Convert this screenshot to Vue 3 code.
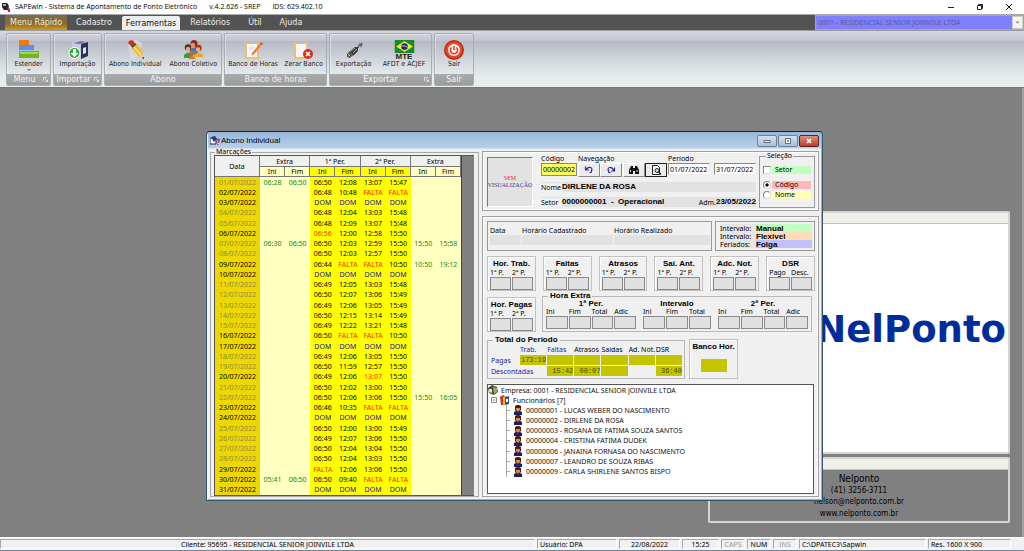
<script setup>
import { ref } from 'vue'

const menus = ['Cadastro', 'Ferramentas', 'Relatórios', 'Útil', 'Ajuda']

const F = 'FALTA'
const D = 'DOM'
const sunday = ['', '', D, D, D, D, '', '']
const work = (a, b, c, d) => ['', '', a, b, c, d, '', '']
const times = [
  ['06:28', '06:50', '06:50', '12:08', '13:07', '15:47', '', ''],
  work('06:48', '10:48', F, F),
  sunday,
  work('06:48', '12:04', '13:03', '15:48'),
  work('06:48', '12:09', '13:07', '15:48'),
  work('06:56', '12:00', '12:58', '15:50'),
  ['06:30', '06:50', '06:50', '12:03', '12:59', '15:50', '15:50', '15:58'],
  work('06:50', '12:03', '12:57', '15:50'),
  ['', '', '06:44', F, F, '10:50', '10:50', '19:12'],
  sunday,
  work('06:49', '12:05', '13:03', '15:48'),
  work('06:50', '12:07', '13:06', '15:49'),
  work('06:49', '12:06', '13:05', '15:49'),
  work('06:50', '12:15', '13:14', '15:49'),
  work('06:49', '12:22', '13:21', '15:48'),
  work('06:50', F, F, '10:50'),
  sunday,
  work('06:49', '12:06', '13:05', '15:50'),
  work('06:50', '11:59', '12:57', '15:50'),
  work('06:49', '12:06', '13:07', '15:50'),
  work('06:50', '12:02', '13:00', '15:50'),
  ['', '', '06:50', '12:06', '13:06', '15:50', '15:50', '16:05'],
  work('06:46', '10:35', F, F),
  sunday,
  work('06:50', '12:00', '13:00', '15:49'),
  work('06:49', '12:07', '13:06', '15:50'),
  work('06:50', '12:04', '13:04', '15:50'),
  work('06:50', '12:04', '13:03', '15:50'),
  work(F, '12:06', '13:06', '15:50'),
  ['05:41', '06:50', '06:50', '09:40', F, F, '', ''],
  sunday
]
const strongDays = [2, 3, 6, 9, 10, 16, 17, 20, 23, 24, 29, 30, 31]
const lateMarks = ['6-2', '20-4']
const days = times.map((cells, i) => {
  const n = i + 1
  return {
    date: String(n).padStart(2, '0') + '/07/2022',
    strong: strongDays.includes(n),
    cells: cells.map((text, c) => ({
      text,
      kind: {
        extra: c < 2 || c > 5,
        red: text === F || lateMarks.includes(n + '-' + c),
        blue: text === D
      }
    }))
  }
})

const halves = ['1ª P.', '2ª P.']
const cards = [
  { title: 'Hor. Trab.', fields: halves },
  { title: 'Faltas', fields: halves },
  { title: 'Atrasos', fields: halves },
  { title: 'Saí. Ant.', fields: halves },
  { title: 'Adc. Not.', fields: halves },
  { title: 'DSR', fields: ['Pago', 'Desc.'] }
]
const overtime = [
  { title: '1ª Per.', fields: ['Ini', 'Fim', 'Total', 'Adic'] },
  { title: 'Intervalo', fields: ['Ini', 'Fim', 'Total'] },
  { title: '2ª Per.', fields: ['Ini', 'Fim', 'Total', 'Adic'] }
]
const totals = [
  { label: 'Pagas', cells: ['173:19', '', '', '', '', ''] },
  { label: 'Descontadas', cells: [null, '15:42', '00:07', '', null, '36:40'] }
]
const staff = [
  '00000001 - LUCAS WEBER DO NASCIMENTO',
  '00000002 - DIRLENE DA ROSA',
  '00000003 - ROSANA DE FATIMA SOUZA SANTOS',
  '00000004 - CRISTINA FATIMA DUDEK',
  '00000006 - JANAINA FORNASA DO NASCIMENTO',
  '00000007 - LEANDRO DE SOUZA RIBAS',
  '00000009 - CARLA SHIRLENE SANTOS BISPO'
]

const code = ref('00000002')
const from = ref('01/07/2022')
const to = ref('31/07/2022')
const bySector = ref(false)
const mode = ref('codigo')
</script>

<template>
  <div class="app">
    <header class="titlebar">
      <svg class="logo" viewBox="0 0 10 10"><path d="M1 1h5l2 3-1 4H3L1 5z" fill="#222" /><path d="M2 2h3v2H2z" fill="#aac" /><path d="M6 5l3 2v3H7z" fill="#c22" /></svg>
      <span>SAPEwin - Sistema de Apontamento de Ponto Eletrônico</span>
      <span class="ver">v.4.2.626 - SREP</span>
      <span class="ids">IDS: 629.402.10</span>
      <div class="winbtns">
        <button type="button" aria-label="Minimizar"><svg viewBox="0 0 8 8"><path d="M1 4.500h6" /></svg></button>
        <button type="button" aria-label="Restaurar"><svg viewBox="0 0 8 8"><path d="M1.500 2.500h4v4h-4zM2.500 2.500v-1h4v4h-1" /></svg></button>
        <button type="button" aria-label="Fechar"><svg viewBox="0 0 8 8"><path d="M1 1l6 6M7 1l-6 6" /></svg></button>
      </div>
    </header>

    <nav class="menubar">
      <button type="button" class="tab quick">Menu Rápido</button>
      <button v-for="m in menus" :key="m" type="button" class="tab" :class="{ active: m === 'Ferramentas' }">{{ m }}</button>
      <div class="company">
        <select disabled aria-label="Empresa"><option>0001 - RESIDENCIAL SENIOR JOINVILE LTDA</option></select>
        <svg viewBox="0 0 10 10"><path d="M2.500 4h5L5 6.500z" fill="#999" /></svg>
      </div>
    </nav>

    <div class="ribbon">
      <section class="group g-menu">
        <div class="tools">
          <button type="button" class="tool">
            <svg viewBox="0 0 20 20"><path d="M0 0h10v5H0z" fill="#f07a10" /><path d="M0 5h15v5H0z" fill="#5c90dc" /><path d="M1 10.500h13" stroke="#9fc2f3" /><path d="M0 11h20v7H0z" fill="#70b51c" /><path d="M1 12h18v2H1z" fill="#a4d94b" /></svg>
            <span>Estender</span><i class="drop"></i>
          </button>
        </div>
        <footer class="wide">Menu<svg class="launch" viewBox="0 0 5 5"><path d="M.5 4V.5H4M2 2l2.500 2.500M4.500 2.500v2h-2" /></svg></footer>
      </section>
      <section class="group g-import">
        <div class="tools">
          <button type="button" class="tool">
            <svg viewBox="0 0 20 20"><path d="M4 2l9-2 7 2v14l-7 3-9-2z" fill="#c6cbe0" /><path d="M13 4l7-2v14l-7 3z" fill="#2d3152" /><path d="M15 8l3-1v6l-3 1z" fill="#dfe6f8" /><path d="M5 3l8-2 5 1-6 2z" fill="#6c75a8" /><circle cx="6.500" cy="13" r="6" fill="#fff" /><circle cx="6.500" cy="13" r="5" fill="#2fae3a" /><path d="M5 9h3v4h2.500l-4 4-4-4H5z" fill="#fff" /></svg>
            <span>Importação</span>
          </button>
        </div>
        <footer class="wide">Importar<svg class="launch" viewBox="0 0 5 5"><path d="M.5 4V.5H4M2 2l2.500 2.500M4.500 2.500v2h-2" /></svg></footer>
      </section>
      <section class="group g-abono">
        <div class="tools">
          <button type="button" class="tool">
            <svg viewBox="0 0 20 20"><path d="M3 3l8-3 6 3-3 14-9 2z" fill="#dadada" opacity=".8" /><path d="M4 1l3-1 3 3-4 3-3-3z" fill="#c82e28" /><path d="M6 6l4-3 2 2-4 4z" fill="#444" /><path d="M7 8l5-4 6 9-4 4z" fill="#f6b722" /><path d="M9 7l7 8" stroke="#ffe37a" stroke-width="1.500" /><path d="M14 17l4-4 1 6z" fill="#e8c792" /><path d="M17 18l2-1v2z" fill="#222" /></svg>
            <span>Abono Individual</span>
          </button>
          <button type="button" class="tool">
            <svg viewBox="0 0 20 20"><circle cx="11" cy="3.500" r="3.500" fill="#8f2626" /><circle cx="10" cy="5" r="2.200" fill="#dd9868" /><path d="M7 9q4-3 8 0v6H7z" fill="#3b7ac2" /><circle cx="5" cy="7.500" r="3.200" fill="#4e2a20" /><circle cx="5" cy="9" r="2.200" fill="#e9a873" /><circle cx="15.500" cy="8" r="3.200" fill="#a8361c" /><circle cx="15" cy="9.500" r="2.200" fill="#ecac7d" /><path d="M1 15q4-5 9 0v3H1z" fill="#3c9b3c" /><path d="M11 15q4-5 9 0v2h-9z" fill="#e5a81f" /><circle cx="9" cy="13" r="2.500" fill="#b86b35" /><path d="M5 19q4-6 8 0z" fill="#dc7c22" /></svg>
            <span>Abono Coletivo</span>
          </button>
        </div>
        <footer>Abono</footer>
      </section>
      <section class="group g-banco">
        <div class="tools">
          <button type="button" class="tool">
            <svg viewBox="0 0 20 20"><path d="M2 2h14v17H2z" fill="#e9c078" /><path d="M4 4h10v13H4z" fill="#f7f7fa" /><path d="M6 1h6v3H6z" fill="#b9bdc6" /><path d="M18 2l2 1.500-9 11-2.500 1 .5-2.500z" fill="#e98345" /><path d="M18 2l2 1.500-1 1.500-2-1.500z" fill="#d35858" /><path d="M6 7h6M6 9h5" stroke="#d6d9e2" /></svg>
            <span>Banco de Horas</span>
          </button>
          <button type="button" class="tool">
            <svg viewBox="0 0 20 20"><path d="M1 2h14v17H1z" fill="#e9c078" /><path d="M3 4h10v13H3z" fill="#f7f7fa" /><path d="M5 1h6v3H5z" fill="#b9bdc6" /><circle cx="15" cy="14" r="5" fill="#d8301f" /><path d="M13 12l4 4M17 12l-4 4" stroke="#fff" stroke-width="1.600" /></svg>
            <span>Zerar Banco</span>
          </button>
        </div>
        <footer>Banco de horas</footer>
      </section>
      <section class="group g-export">
        <div class="tools">
          <button type="button" class="tool">
            <svg viewBox="0 0 20 20"><path d="M14 8l1-3 1-1 1 2 1-3" fill="none" stroke="#555" stroke-width="1.300" /><path d="M6 11l5-4 3 0 0 4-5 5z" fill="#3c3c3c" /><path d="M7 11l4-3M9 13l4-4" stroke="#a5a5a5" /><path d="M3 14l3-3 3 4-3 3-3-1z" fill="#555" /><path d="M4 14l2 2" stroke="#ccc" /></svg>
            <span>Exportação</span>
          </button>
          <button type="button" class="tool mte">
            <svg viewBox="0 0 21 14"><path d="M0 0h21v14H0z" fill="#138a2c" /><path d="M10.500 1l9 6-9 6-9-6z" fill="#f5e81c" /><circle cx="10.500" cy="7" r="3.600" fill="#1b2b86" /><path d="M7 6.500q4-1 7 1.500" fill="none" stroke="#dfe8ff" stroke-width=".8" /></svg>
            <b>MTE</b>
            <span>AFDT e ACJEF</span>
          </button>
        </div>
        <footer>Exportar<svg class="launch" viewBox="0 0 5 5"><path d="M.5 4V.5H4M2 2l2.500 2.500M4.500 2.500v2h-2" /></svg></footer>
      </section>
      <section class="group g-sair">
        <div class="tools">
          <button type="button" class="tool">
            <svg viewBox="0 0 20 20"><circle cx="10" cy="10" r="10" fill="#c5260f" /><circle cx="10" cy="10" r="8.500" fill="#e2492c" /><circle cx="10" cy="10" r="6" fill="#fdf1ec" /><path d="M7.500 7.500a3.600 3.600 0 1 0 5 0M10 6v4" fill="none" stroke="#df3a1c" stroke-width="1.500" /></svg>
            <span>Saír</span>
          </button>
        </div>
        <footer>Saír</footer>
      </section>
    </div>

    <main class="desk">
      <section class="brand">
        <div class="strip"></div>
        <div class="brandbody"><span>NelPonto</span></div>
      </section>
      <section class="contact">
        <div class="strip"></div>
        <h2>Nelponto</h2>
        <p>(41) 3256-3711</p>
        <p>nelson@nelponto.com.br</p>
        <p>www.nelponto.com.br</p>
      </section>

      <section class="dialog">
        <header class="dlgtitle">
          <svg viewBox="0 0 10 10"><path d="M0 2h6v6H0z" fill="#fff" stroke="#223" /><path d="M1 1l4-1 2 3-3 3z" fill="#223a8a" /><path d="M7 4q3-2 2 1L8 6v1M8 8v1" fill="none" stroke="#c22" stroke-width="1.200" /></svg>
          <h1>Abono Individual</h1>
          <button type="button" aria-label="Minimizar janela"><svg viewBox="0 0 12 8"><path d="M3 3.500h6v2H3z" fill="#fff" stroke="#667" /></svg></button>
          <button type="button" aria-label="Maximizar janela"><svg viewBox="0 0 12 8"><path d="M3.500 1.500h5v5h-5z" fill="#fff" stroke="#667" /><path d="M5.500 3.500h1v1h-1z" stroke="#667" /></svg></button>
          <button type="button" class="close" aria-label="Fechar janela"><svg viewBox="0 0 12 8"><path d="M4 2l4 4M8 2L4 6" stroke="#fff" stroke-width="1.600" /></svg></button>
        </header>

        <div class="dlgbody">
          <fieldset class="marks">
            <legend>Marcações</legend>
            <div class="sheet">
              <table>
                <colgroup><col class="cdate"><col v-for="n in 8" :key="n"></colgroup>
                <thead>
                  <tr>
                    <th rowspan="2">Data</th><th colspan="2">Extra</th><th colspan="2">1ª Per.</th><th colspan="2">2ª Per.</th><th colspan="2">Extra</th>
                  </tr>
                  <tr>
                    <th v-for="n in 8" :key="n" :class="n > 2 && n < 7 ? 'hy' : 'hx'">{{ n % 2 ? 'Ini' : 'Fim' }}</th>
                  </tr>
                </thead>
                <tbody>
                  <tr v-for="d in days" :key="d.date">
                    <td class="date" :class="{ strong: d.strong }">{{ d.date }}</td>
                    <td v-for="(c, i) in d.cells" :key="i" :class="c.kind">{{ c.text }}</td>
                  </tr>
                </tbody>
              </table>
            </div>
          </fieldset>

          <div class="side">
            <div class="person">
              <div class="photo"><span class="r">SEM</span><span>VISUALIZAÇÃO</span></div>
              <div class="who">
                <div class="bar">
                  <div class="fcode"><label for="code">Código</label><input id="code" v-model="code" type="text"></div>
                  <div class="fnav">
                    <span>Navegação</span>
                    <div class="navbtns">
                      <button type="button" aria-label="Anterior"><svg viewBox="0 0 12 10"><path d="M2.500 1.500v3.500h3.500M3 4.500Q5 2 7.500 2.500T8 7.500H6.500" fill="none" stroke="#26269a" stroke-width="1.200" /></svg></button>
                      <button type="button" aria-label="Próximo"><svg viewBox="0 0 12 10"><path d="M9.500 2.500v3.500H6M9 5.500Q7 2 4.500 2.500T4 7.500h1.500" fill="none" stroke="#26269a" stroke-width="1.200" /></svg></button>
                      <button type="button" class="find" aria-label="Localizar"><svg viewBox="0 0 12 10"><path d="M1 9V5l2-4h2v2h2V1h2l2 4v4H7V6H5v3z" fill="#111" /><path d="M2.500 5v2M9 5v2" stroke="#ddd" /></svg></button>
                      <button type="button" class="focus" aria-label="Visualizar"><svg viewBox="0 0 12 10"><path d="M2.500.5h5l2 2v7h-7z" fill="#fff" stroke="#222" /><circle cx="7" cy="5.500" r="2" fill="#bfe6ea" stroke="#222" /><path d="M8.500 7l2.500 2.500" stroke="#222" stroke-width="1.400" /></svg></button>
                    </div>
                  </div>
                  <div class="fper">
                    <label for="from">Período</label>
                    <div class="dates"><input id="from" v-model="from" type="text"><input v-model="to" type="text" aria-label="Período final"></div>
                  </div>
                </div>
                <div class="line"><span class="k">Nome</span><b>DIRLENE DA ROSA</b></div>
                <div class="line last"><span class="k">Setor</span><b>0000000001&nbsp; -&nbsp; Operacional</b><span class="adm">Adm.</span><b>23/05/2022</b></div>
              </div>
              <fieldset class="pick">
                <legend>Seleção</legend>
                <label class="sector"><input v-model="bySector" type="checkbox"><span>Setor</span></label>
                <label class="bycode"><input v-model="mode" type="radio" name="mode" value="codigo"><span>Código</span></label>
                <label class="byname"><input v-model="mode" type="radio" name="mode" value="nome"><span>Nome</span></label>
              </fieldset>
            </div>

            <div class="detail">
              <div class="row top">
                <div class="sched">
                  <label class="s1"><span>Data</span><input type="text" readonly></label>
                  <label class="s2"><span>Horário Cadastrado</span><input type="text" readonly></label>
                  <label class="s3"><span>Horário Realizado</span><input type="text" readonly></label>
                </div>
                <dl class="key">
                  <div><dt>Intervalo:</dt><dd class="manual">Manual</dd></div>
                  <div><dt>Intervalo:</dt><dd class="flex">Flexivel</dd></div>
                  <div><dt>Feriados:</dt><dd class="off">Folga</dd></div>
                </dl>
              </div>

              <div class="row cards">
                <div v-for="c in cards" :key="c.title" class="card">
                  <h3>{{ c.title }}</h3>
                  <div class="fields"><label v-for="f in c.fields" :key="f"><span>{{ f }}</span><input type="text" readonly></label></div>
                </div>
              </div>

              <div class="row extra">
                <div class="card">
                  <h3>Hor. Pagas</h3>
                  <div class="fields"><label v-for="f in halves" :key="f"><span>{{ f }}</span><input type="text" readonly></label></div>
                </div>
                <fieldset class="over">
                  <legend>Hora Extra</legend>
                  <div class="overrow">
                    <div v-for="o in overtime" :key="o.title">
                      <h3>{{ o.title }}</h3>
                      <div class="fields"><label v-for="f in o.fields" :key="f"><span>{{ f }}</span><input type="text" readonly></label></div>
                    </div>
                  </div>
                </fieldset>
              </div>

              <div class="row sums">
                <fieldset class="total">
                  <legend>Total do Período</legend>
                  <table>
                    <colgroup><col class="clabel"><col v-for="n in 6" :key="n"></colgroup>
                    <thead><tr><th></th><th class="bl">Trab.</th><th class="bl">Faltas</th><th>Atrasos</th><th>Saídas</th><th>Ad. Not.</th><th>DSR</th></tr></thead>
                    <tbody>
                      <tr v-for="t in totals" :key="t.label">
                        <th class="bl" scope="row">{{ t.label }}</th>
                        <td v-for="(v, i) in t.cells" :key="i" :class="{ gold: v !== null }">{{ v }}</td>
                      </tr>
                    </tbody>
                  </table>
                </fieldset>
                <div class="card bank"><h3>Banco Hor.</h3><div class="goldbox"></div></div>
              </div>

              <div class="tree">
                <div class="node root">
                  <svg viewBox="0 0 10 10"><path d="M0 3l4-3 5 2 1 5-4 3-5-2z" fill="#54463a" /><path d="M5 2l4 1v4L6 9z" fill="#8fae68" /><path d="M1 4h3v4L1 7z" fill="#e6dcd0" /></svg>
                  <span>Empresa: 0001 - RESIDENCIAL SENIOR JOINVILE LTDA</span>
                </div>
                <div class="node branch">
                  <svg class="box" viewBox="0 0 6 6"><path d="M.5.5h5v5h-5zM1.500 3h3" fill="#fff" stroke="#888" /></svg>
                  <svg viewBox="0 0 10 10"><path d="M0 2l3-2 2 1v9H1z" fill="#c73325" /><path d="M3 2l3-1v9H3z" fill="#f3c41e" /><path d="M5 2l4-1v8l-4 1z" fill="#2f4f9b" /><path d="M6 4h2v3H6z" fill="#fff" /></svg>
                  <span>Funcionários [7]</span>
                </div>
                <ul>
                  <li v-for="s in staff" :key="s" class="node">
                    <svg viewBox="0 0 8 10"><path d="M1 1l2-1h2l2 1v4L6 6H2L1 5z" fill="#4d1c10" /><path d="M2 3h4v2L5 6H3L2 5z" fill="#d88a4e" /><path d="M0 7l2-1h4l2 1v3H0z" fill="#161f6e" /><path d="M3 6h2L4 8z" fill="#c83b2e" /></svg>
                    <span>{{ s }}</span>
                  </li>
                </ul>
              </div>
            </div>
          </div>
        </div>
      </section>
    </main>

    <footer class="status">
      <span class="client">Cliente: 95695 - RESIDENCIAL SENIOR JOINVILE LTDA</span>
      <span class="user">Usuário: DPA</span>
      <span class="day">22/08/2022</span>
      <span class="hour">15:25</span>
      <span class="lock off">CAPS</span>
      <span class="lock">NUM</span>
      <span class="lock off">INS</span>
      <span class="path">C:\DPATEC3\Sapwin</span>
      <span class="res">Res. 1600 X 900</span>
    </footer>
  </div>
</template>

<style>
body { margin: 0; background: #808080; }
</style>

<style scoped>
* { box-sizing: border-box; }
.app { display: flex; flex-direction: column; min-height: 100vh; overflow: hidden; color: #000; font: 7px/9px "Noto Sans", "Liberation Sans", sans-serif; }
button, input, select { font: inherit; color: inherit; padding: 0; margin: 0; border: 0; border-radius: 0; background: none; }
h1, h2, h3, p, dl, dd, ul { margin: 0; padding: 0; }
h3, b, legend { font-weight: normal; }
svg { display: block; flex: none; }
fieldset { margin: 0; padding: 0; min-width: 0; }
span { white-space: nowrap; }

.titlebar { display: flex; align-items: center; height: 15px; padding: 0 3px 1px 1px; background: #fff; border-bottom: 1px solid #aaa; font: 7px/12px "Open Sans", "Noto Sans", sans-serif; }
.logo { width: 10px; height: 10px; margin-right: 4px; }
.ver { margin-left: 12px; }
.ids { margin-left: 12px; }
.winbtns { display: flex; gap: 21px; margin-left: auto; padding-right: 8px; }
.winbtns button { width: 8px; height: 8px; }
.winbtns svg { width: 8px; height: 8px; fill: none; stroke: #222; stroke-width: 1; }

.menubar { display: flex; align-items: stretch; height: 15px; padding-left: 5px; background: #535353; font: 8px/13px "DejaVu Sans", sans-serif; }
.tab { padding: 0 9px; color: #eee; }
.quick { padding: 0 5px; background: linear-gradient(#766b55, #8a6c28 60%, #d29a1c); color: #f2ead8; border-radius: 2px 2px 0 0; }
.tab.active { margin: 1px 1px 0 1px; padding: 0 4px; background: #e9eef2; color: #111; border-radius: 2px 2px 0 0; }
.company { display: flex; margin-left: auto; width: 209px; border: 1px solid #a8a8a8; background: #7f7fff; font: 7px/12px "Noto Sans", "Liberation Sans", sans-serif; }
.company select { flex: 1; appearance: none; padding-left: 2px; color: #5c5c9a; opacity: 1; min-width: 0; }
.company svg { width: 11px; height: 100%; background: #f4f4f4; border: 1px solid #ccc; }

.ribbon { display: flex; gap: 2px; height: 58px; padding: 2px 6px 1px; border-top: 1px solid #9a9a9a; border-bottom: 1px solid #777; background: linear-gradient(#d4d7df, #c3c6d1 17%, #b4b9c5 18%, #d0d5da 50%, #e6eded 82%, #e6eded); }
.group { display: flex; flex-direction: column; border: 1px solid #a9adb4; border-radius: 2px; box-shadow: inset 1px 1px 0 rgba(255, 255, 255, .4); overflow: hidden; }
.g-menu { width: 45px; }
.g-import { width: 49px; }
.g-abono { width: 118px; }
.g-banco { width: 103px; }
.g-export { width: 103px; }
.g-sair { width: 40px; }
.tools { flex: 1; display: flex; justify-content: space-around; padding-top: 6px; }
.tool { display: flex; flex-direction: column; align-items: center; justify-content: flex-start; font: 7px/9px "DejaVu Sans Condensed", "DejaVu Sans", sans-serif; color: #222; }
.tool svg { width: 20px; height: 20px; }
.tool.mte svg { width: 21px; height: 13px; }
.tool b { font: bold 8px/7px "Liberation Sans", sans-serif; }
.drop { border: 2px solid transparent; border-top-color: #777; border-bottom: 0; }
.group footer { position: relative; height: 11px; background: linear-gradient(#a9abad, #9a9c9e); color: #f4f4f4; text-align: center; font: 8px/11px "DejaVu Sans", sans-serif; }
.group .wide { padding-right: 8px; }
.launch { position: absolute; right: 2px; top: 3px; width: 5px; height: 5px; fill: none; stroke: #eee; stroke-width: .8; }

.desk { position: relative; flex: 1; background: #808080; border-right: 2px solid #a0a0a0; }
.brand, .contact { position: absolute; right: 12px; width: 302px; border: 2px solid #d6d6d0; border-radius: 2px; overflow: hidden; }
.brand { top: 123px; height: 243px; display: flex; flex-direction: column; }
.strip { height: 11px; background: #f0f0ea; border-bottom: 1px solid #c4c4bc; }
.brandbody { flex: 1; display: flex; align-items: center; justify-content: flex-end; background: #fff; color: #002d9c; font: bold 37px/40px "DejaVu Sans", sans-serif; padding: 0 2px 17px 0; }
.contact { top: 369px; height: 66px; text-align: center; font: 8px/12px "DejaVu Sans Condensed", "DejaVu Sans", sans-serif; }
.contact .strip { margin-bottom: 3px; }
.contact h2 { font: 10px/12px "DejaVu Sans Condensed", "DejaVu Sans", sans-serif; }
.contact p:nth-of-type(1) { line-height: 11px; }

.dialog { position: absolute; left: 206px; top: 43px; width: 617px; height: 370px; display: flex; flex-direction: column; padding: 0 3px 3px; border: 1px solid #33586b; border-top-color: #222; border-radius: 4px 4px 0 0; background: linear-gradient(#98b8d8, #b4d0ec 16px, #f0f0f0 17px); box-shadow: inset 1px 0 0 #e8f4fc, inset -1px -1px 0 #6cc6dc; }
.dlgtitle { flex: none; display: flex; align-items: center; height: 17px; gap: 1px; }
.dlgtitle svg { width: 10px; height: 10px; fill: none; }
.dlgtitle h1 { flex: 1; font: 8px/12px "Liberation Sans", sans-serif; }
.dlgtitle button { display: grid; place-items: center; width: 20px; height: 12px; border: 1px solid #6f8296; border-radius: 2px; background: linear-gradient(#d4e2f0, #a9bfd6); }
.dlgtitle button svg { width: 12px; height: 8px; }
.dlgtitle .close { border-color: #6a2018; background: linear-gradient(#dd8d7e, #b8402c); }
.dlgbody { flex: 1; min-height: 0; display: flex; gap: 3px; background: #f0f0f0; }

.marks { width: 269px; border: 1px solid #a8a8a8; padding: 0 4px 0 3px; }
.marks legend { margin-left: 1px; padding: 0 1px; line-height: 6px; }
.sheet { height: 341px; background: #808080; padding-right: 14px; border: 1px solid #555; border-width: 1px 0 1px 1px; }
.sheet table { width: 247px; height: 339px; table-layout: fixed; border-collapse: separate; border-spacing: 0; border-right: 1px solid #444; }
.cdate { width: 45px; }
.sheet th, .sheet td { padding: 0; font-weight: normal; text-align: center; white-space: nowrap; line-height: 9px; }
.sheet th { height: 11px; background: #f0f0f0; border: 1px solid #777; border-width: 0 1px 1px 0; }
.sheet th.hx, .sheet th.hy { height: 10px; }
.sheet th.hx { background: #ffffc0; }
.sheet th.hy { background: #ff0; }
.sheet td { background: #ff0; }
.sheet td.extra { background: #ffffc0; color: #128a12; }
.sheet td.date { background: #ecd800; color: #918a42; }
.sheet td.strong { color: #000; }
.sheet td.red { color: #ff2a00; }
.sheet td.blue { color: #1414a0; }

.side { flex: 1; min-width: 0; display: flex; flex-direction: column; gap: 5px; padding-top: 2px; }
.person, .detail { border: 1px solid #a0a0a0; box-shadow: inset 0 0 0 1px #fff; }
.person { flex: none; display: flex; height: 60px; padding: 0 3px 0 4px; }
.photo { display: flex; flex-direction: column; align-items: center; justify-content: center; width: 46px; height: 50px; margin-top: 5px; border: 1px solid #777; border-right-color: #fff; border-bottom-color: #fff; background: #e2e2e2; font: 6px/7px "Liberation Serif", serif; color: #3a3aa0; }
.photo .r { color: #e22; }
.who { flex: 1; min-width: 0; padding: 3px 3px 0 8px; }
.bar { display: flex; height: 23px; }
.fcode { width: 37px; }
.fcode label, .fper label, .fnav > span { display: block; line-height: 8px; }
.fcode input { display: block; width: 36px; height: 13px; background: #ffff60; border: 1px solid #888; padding-left: 1px; }
.fnav { width: 89px; }
.navbtns { display: flex; }
.navbtns button { display: grid; place-items: center; width: 22px; height: 14px; border: 1px solid #fff; border-right-color: #888; border-bottom-color: #888; background: #ececec; }
.navbtns svg { width: 12px; height: 10px; }
.navbtns .focus { border: 1px solid #222; }
.navbtns .find { margin-left: 1px; }
.fper { flex: 1; min-width: 0; padding-left: 1px; }
.dates { display: flex; gap: 4px; }
.dates input { flex: 1; width: 40px; min-width: 0; height: 12px; background: #fff; border: 1px solid #888; border-right-color: #eee; border-bottom-color: #eee; padding-left: 1px; }
.line { display: flex; align-items: center; height: 10px; margin-top: 4px; background: #e2e2e2; }
.line.last { margin-top: 5px; }
.line .k { flex: none; width: 21px; background: #f0f0f0; }
.line b { font: bold 8px/10px "Liberation Sans", sans-serif; white-space: nowrap; }
.adm { margin-left: auto; }
.pick { width: 56px; height: 56px; border: 1px solid #999; padding: 0 3px; }
.pick legend { margin-left: 3px; padding: 0 1px; line-height: 8px; }
.pick label { display: flex; align-items: center; gap: 1px; height: 9px; }
.pick label span { flex: 1; padding-left: 3px; line-height: 8px; }
.pick .sector { margin: 5px 0 6px; }
.pick .bycode { margin-bottom: 1px; }
.pick .sector span { background: #c0ffc0; }
.pick .bycode span { background: #ffb8b8; }
.pick .byname span { background: #ffffb8; }
.pick input { appearance: none; width: 8px; height: 8px; background: #fff; border: 1px solid #888; border-right-color: #ddd; border-bottom-color: #ddd; }
.pick input[type="radio"] { border-radius: 50%; }
.pick input[type="radio"]:checked { background: radial-gradient(#000 35%, #fff 40%); }

.detail { flex: 1; padding: 4px 3px 1px 4px; }
.row { display: flex; }
.top { gap: 3px; height: 30px; }
.sched { flex: 1; display: flex; gap: 1px; border: 1px solid #999; padding: 4px 1px 4px 2px; }
.sched label { display: flex; flex-direction: column; }
.sched input { width: 100%; height: 10px; background: #e2e2e2; }
.sched span { line-height: 9px; }
.s1 { width: 31px; }
.s2 { width: 91px; }
.s3 { flex: 1; }
.key { width: 100px; border: 1px solid #999; padding: 2px 2px 1px 4px; }
.key div { display: flex; }
.key dt { width: 36px; line-height: 9px; background: #e6e6e6; }
.key dd { flex: 1; font: bold 8px/9px "Liberation Sans", sans-serif; }
.key dt, .key dd { height: 8px; }
.manual { background: #c0ffc0; }
.flex { background: #ffdcb8; }
.off { background: #c0c0ff; }

.cards { gap: 7px; margin-top: 5px; }
.card { width: 49px; height: 35px; padding: 2px 2px 0; border: 1px solid #c0c0c0; box-shadow: inset 1px 1px 0 #fff; }
h3 { text-align: center; font: bold 8px/10px "Liberation Sans", sans-serif; white-space: nowrap; }
.fields { display: flex; gap: 1px; }
.fields label { flex: 1; min-width: 0; }
.fields span { display: block; line-height: 8px; }
.fields input { display: block; width: 100%; height: 13px; background: #e0e0e0; border: 1px solid #8a8a8a; }
.extra { gap: 6px; margin-top: 1px; align-items: flex-end; }
.over { flex: 1; border: 1px solid #b8b8b8; padding: 0 3px 1px; height: 40px; margin-right: 3px; }
.over legend, .total legend { margin-left: 2px; padding: 0 2px; font: bold 8px/8px "Liberation Sans", sans-serif; }
.overrow { display: flex; justify-content: space-between; }
.overrow > div:nth-child(odd) { width: 90px; }
.overrow > div:nth-child(even) { width: 68px; }
.overrow h3 { line-height: 8px; }
.sums { gap: 4px; margin-top: 4px; align-items: flex-end; }
.total { width: 198px; height: 43px; border: 1px solid #b8b8b8; padding: 0 1px 1px 2px; }
.total legend { margin-left: 3px; }
.total table { width: 100%; table-layout: fixed; border-collapse: separate; border-spacing: 1px; margin-top: -1px; }
.clabel { width: 28px; }
.total th, .total td { height: 10px; padding: 0; font-weight: normal; text-align: left; white-space: nowrap; line-height: 9px; }
.total .bl { color: #22229a; }
.total td { text-align: right; font: 7px/9px "Liberation Mono", monospace; color: #4c4c00; }
.total .gold { background: #c4c400; }
.bank { height: 40px; }
.goldbox { width: 26px; height: 13px; margin: 7px auto 0; background: #c4c400; }

.tree { margin: 5px 1px 0 0; height: 110px; border: 1px solid #555; background: #fff; color: #111; }
.node { display: flex; align-items: center; gap: 3px; height: 10px; }
.node svg { width: 10px; height: 10px; }
.node .box { width: 6px; height: 6px; }
.branch { padding-left: 3px; }
.tree ul { display: flex; flex-direction: column; justify-content: space-between; list-style: none; margin-left: 18px; border-left: 1px solid #aaa; height: 72px; }
.tree li { gap: 4px; }
.tree li::before { content: ""; width: 3px; border-top: 1px solid #aaa; }
.tree li svg { width: 8px; height: 10px; }

.status { display: flex; gap: 2px; height: 14px; padding: 1px 13px 1px 0; background: #f0f0f0; border-top: 1px solid #fff; border-bottom: 1px solid #789; }
.status span { border: 1px solid #a8a8a8; border-right-color: #fff; border-bottom-color: #fff; padding: 0 2px; text-align: center; line-height: 9px; }
.client { flex: 1; }
.user { width: 80px; }
.day { width: 61px; }
.hour { width: 37px; }
.lock { width: 24px; }
.lock.off { background: none; color: #999; }
.path { width: 127px; }
.res { width: 83px; }
.status .user, .status .path, .status .res { text-align: left; }
</style>
